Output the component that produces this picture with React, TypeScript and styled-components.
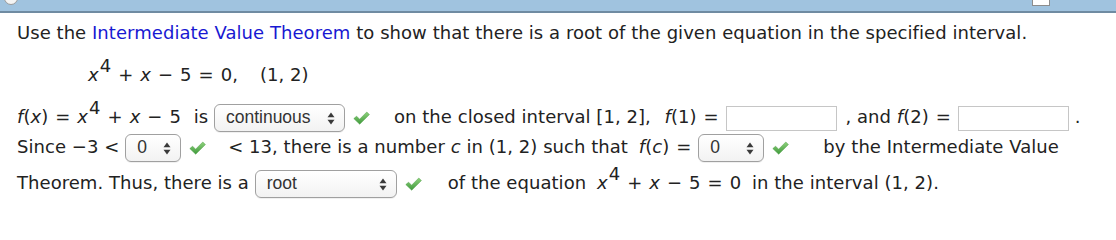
import React from "react";
import styled, { createGlobalStyle } from "styled-components";

const GlobalStyle = createGlobalStyle`
  html, body { margin: 0; padding: 0; background: #fff; }
  body {
    font-family: "DejaVu Sans", Verdana, sans-serif;
    color: #222;
    font-size: 18px;
    letter-spacing: 0.05px;
  }
`;

const Page = styled.div`
  width: 1116px;
  height: 220px;
  overflow: hidden;
  background: #fff;
`;

const TopBar = styled.div`
  height: 11px;
  background: #a0c3df;
  border-bottom: 2px solid #6f8ba2;
  display: flex;
  align-items: flex-start;
  padding: 0 4px;
  overflow: hidden;
`;

const BarDot = styled.span`
  width: 12px;
  height: 12px;
  margin-top: -9px;
  border-radius: 50%;
  background: #f4f4f4;
  border: 1px solid #9a9a9a;
`;

const BarBox = styled.span`
  width: 16px;
  height: 14px;
  margin-top: -10px;
  margin-left: auto;
  margin-right: 62px;
  background: #fff;
  border: 1px solid #8d8d8d;
`;

const Content = styled.div`
  padding: 7px 0 0 17px;
`;

const Line = styled.div<{ $h: number; $mt?: number; $indent?: number }>`
  height: ${(p) => p.$h}px;
  line-height: ${(p) => p.$h}px;
  margin-top: ${(p) => p.$mt ?? 0}px;
  padding-left: ${(p) => p.$indent ?? 0}px;
  white-space: nowrap;
`;

const Link = styled.span`
  color: #1818d2;
`;

const V = styled.i`
  font-style: italic;
`;

const Op = styled.span`
  padding: 0 1.2px;
`;

const Sup = styled.sup`
  font-size: 18px;
  line-height: 0;
  vertical-align: 0.5em;
  margin-left: 1px;
`;

const Space = styled.span<{ $w: number }>`
  display: inline-block;
  width: ${(p) => p.$w}px;
`;

const SelectBox = styled.span<{ $w: number }>`
  display: inline-flex;
  box-sizing: border-box;
  align-items: center;
  justify-content: space-between;
  vertical-align: middle;
  width: ${(p) => p.$w}px;
  height: 28px;
  padding: 0 9px 0 11px;
  border: 1px solid #a0a0a0;
  border-radius: 6px;
  background: linear-gradient(#ffffff, #f2f2f2);
  box-shadow: 0 1px 0 rgba(0, 0, 0, 0.06);
  font-family: "Liberation Sans", Arial, sans-serif;
  font-size: 17.5px;
  letter-spacing: 0;
  line-height: 1;
  color: #333;
`;

const InputBox = styled.span`
  display: inline-block;
  box-sizing: border-box;
  vertical-align: middle;
  width: 111px;
  height: 25px;
  border: 1px solid #c6c6c6;
  background: #fff;
`;

const Arrows = () => (
  <svg width="8" height="13" viewBox="0 0 8 13">
    <path d="M4 0.5 L7.5 5.3 L0.5 5.3 Z" fill="#3a3a3a" />
    <path d="M4 12.5 L7.5 7.7 L0.5 7.7 Z" fill="#3a3a3a" />
  </svg>
);

const CheckWrap = styled.span`
  display: inline-block;
  vertical-align: middle;
  margin: 0 0 0 8px;
  line-height: 0;
`;

const Check = () => (
  <CheckWrap>
    <svg width="17" height="14" viewBox="0 0 17 14">
      <defs>
        <linearGradient id="ckg" x1="0" y1="0" x2="0" y2="1">
          <stop offset="0" stopColor="#8fd27c" />
          <stop offset="1" stopColor="#3f9a3c" />
        </linearGradient>
      </defs>
      <path
        d="M0.8 7.6 L3.6 5.2 L6.6 8.2 L13.8 1 L16.4 3.6 L6.7 13.2 Z"
        fill="url(#ckg)"
        stroke="#4c9f45"
        strokeWidth="0.5"
        strokeLinejoin="round"
      />
    </svg>
  </CheckWrap>
);

const Select = ({ label, w }: { label: string; w: number }) => (
  <SelectBox $w={w}>
    <span>{label}</span>
    <Arrows />
  </SelectBox>
);

const Poly = () => (
  <>
    <V>x</V>
    <Sup>4</Sup> <Op>+</Op> <V>x</V> <Op>−</Op> 5
  </>
);

export default function App() {
  return (
    <Page>
      <GlobalStyle />
      <TopBar>
        <BarDot />
        <BarBox />
      </TopBar>
      <Content>
        <Line $h={26}>
          Use the <Link>Intermediate Value Theorem</Link> to show that there is a root of the given
          equation in the specified interval.
        </Line>
        <Line $h={26} $mt={16} $indent={71}>
          <Poly /> <Op>=</Op> 0,
          <Space $w={22} />
          (1, 2)
        </Line>
        <Line $h={30} $mt={14}>
          <V>f</V>(<V>x</V>) <Op>=</Op> <Poly />
          <Space $w={7} /> is <Select label="continuous" w={131} />
          <Check />
          <Space $w={24} />
          on the closed interval [1, 2],
          <Space $w={8} /> <V>f</V>(1) <Op>=</Op> <InputBox />
          <Space $w={3} /> , and <V>f</V>(2) <Op>=</Op> <InputBox /> .
        </Line>
        <Line $h={30}>
          Since −3 &lt; <Select label="0" w={56} />
          <Check />
          <Space $w={22} />
          &lt; 13, there is a number <V>c</V> in (1, 2) such that
          <Space $w={5} /> <V>f</V>(<V>c</V>) <Op>=</Op> <Select label="0" w={66} />
          <Check />
          <Space $w={34} />
          by the Intermediate Value
        </Line>
        <Line $h={30} $mt={6}>
          Theorem. Thus, there is a <Select label="root" w={142} />
          <Check />
          <Space $w={26} />
          of the equation
          <Space $w={5} /> <Poly /> <Op>=</Op> 0
          <Space $w={5} /> in the interval (1, 2).
        </Line>
      </Content>
    </Page>
  );
}
